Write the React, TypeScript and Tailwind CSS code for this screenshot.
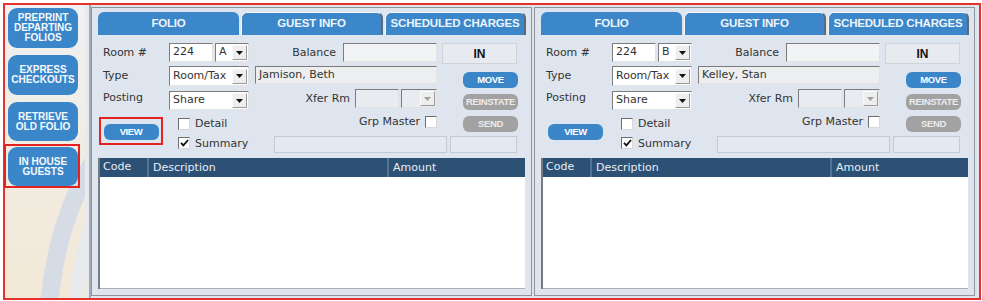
import type { ReactNode } from 'react'

const lbl = "font-['DejaVu_Sans',sans-serif] text-[11px] text-[#343434]"
const inset = 'border border-t-[#7c7c7c] border-l-[#7c7c7c] border-b-[#e3e3e3] border-r-[#e3e3e3]'
const flat = 'border border-[#c3cad2]'

function SideButton({ children, className = '' }: { children: ReactNode; className?: string }) {
    return (
        <div className={`relative flex w-[70px] flex-col items-center justify-center rounded-[9px] bg-[#3a86c8] text-center font-['Liberation_Sans',Arial,sans-serif] text-[10px] font-bold leading-[10px] text-[#f5f9fd] ${className}`}>
            {children}
        </div>
    )
}

function Tab({ children, active }: { children: ReactNode; active?: boolean }) {
    return (
        <div className={`flex h-[23px] items-center justify-center whitespace-nowrap rounded-t-[6px] bg-[#3b87c9] font-['Liberation_Sans',Arial,sans-serif] text-[11.5px] font-bold tracking-[-0.2px] text-[#eef4fb] ${active ? '' : 'border-t border-l border-t-[#f5f8fb] border-l-[#f5f8fb] border-r-2 border-r-[#5d6977]'}`}>
            {children}
        </div>
    )
}

function TextBox({ children, className = '' }: { children?: ReactNode; className?: string }) {
    return (
        <div className={`flex items-center pl-[3px] ${lbl} text-[#222] ${className}`}>
            {children}
        </div>
    )
}

function Select({ value, className = '', disabled }: { value?: string; className?: string; disabled?: boolean }) {
    return (
        <div className={`flex items-center justify-between ${inset} ${disabled ? 'bg-[#e8ecf0]' : 'bg-white'} ${className}`}>
            <span className={`pl-[3px] ${lbl} text-[#222]`}>{value}</span>
            <span className="mr-[1px] flex h-[15px] w-[15px] items-center justify-center border border-t-[#fafafa] border-l-[#fafafa] border-b-[#9a9a9a] border-r-[#9a9a9a] bg-[#eeeeee]">
                <svg width="7" height="4" viewBox="0 0 7 4">
                    <path d="M0 0h7L3.5 4z" fill={disabled ? '#a0a0a0' : '#111'} />
                </svg>
            </span>
        </div>
    )
}

function Check({ checked, className = '' }: { checked?: boolean; className?: string }) {
    return (
        <span className={`flex h-[12px] w-[12px] shrink-0 items-center justify-center border border-t-[#6d6d6d] border-l-[#6d6d6d] border-b-[#d8d8d8] border-r-[#d8d8d8] bg-white ${className}`}>
            {checked && (
                <svg width="9" height="8" viewBox="0 0 9 8">
                    <path d="M1 3.8l2.4 2.6L8 1" stroke="#111" strokeWidth="1.8" fill="none" />
                </svg>
            )}
        </span>
    )
}

function ActionBtn({ children, grey, className = '' }: { children: ReactNode; grey?: boolean; className?: string }) {
    return (
        <div className={`flex h-[16px] w-[55px] shrink-0 items-center justify-center whitespace-nowrap rounded-[6px] font-['Liberation_Sans',Arial,sans-serif] text-[9.5px] font-bold tracking-[-0.4px] ${grey ? 'bg-[#a2a2a2] text-[#ececec]' : 'bg-[#3a86c8] text-white'} ${className}`}>
            {children}
        </div>
    )
}

function FolioPanel({ unit, guest, markView }: { unit: string; guest: string; markView?: boolean }) {
    return (
        <div className="flex h-full w-[441px] flex-col border border-[#8e959d] bg-[#dee5ee]">
            <div className="grid grid-cols-[141px_142px_141px] gap-[2px] pl-[6px] pt-[4px]">
                <Tab active>FOLIO</Tab>
                <Tab>GUEST INFO</Tab>
                <Tab>SCHEDULED CHARGES</Tab>
            </div>

            <div className="mt-[8px] flex h-[21px] items-start pl-[11px]">
                <span className={`${lbl} w-[66px] leading-[19px]`}>Room #</span>
                <TextBox className={`h-[19px] w-[44px] bg-white ${inset}`}>224</TextBox>
                <Select value={unit} className="ml-[2px] h-[19px] w-[34px]" />
                <span className={`${lbl} w-[87px] text-right leading-[19px]`}>Balance</span>
                <TextBox className={`ml-[7px] h-[19px] w-[94px] bg-[#f1f3f5] ${inset}`} />
                <div className="ml-[5px] flex h-[21px] w-[75px] items-center justify-center border border-[#cdd4dc] bg-[#e7ebf0] font-['Liberation_Sans',Arial,sans-serif] text-[12px] font-bold text-[#111]">
                    IN
                </div>
            </div>

            <div className="mt-[2px] flex h-[22px] items-start pl-[11px]">
                <span className={`${lbl} w-[66px] leading-[20px]`}>Type</span>
                <Select value="Room/Tax" className="h-[20px] w-[80px]" />
                <TextBox className={`ml-[6px] h-[18px] w-[182px] bg-[#eceeef] ${inset}`}>{guest}</TextBox>
                <ActionBtn className="ml-[26px] mt-[6px]">MOVE</ActionBtn>
            </div>

            <div className="mt-[1px] flex h-[21px] items-start pl-[11px]">
                <span className={`${lbl} mt-[1px] w-[66px] leading-[16px]`}>Posting</span>
                <Select value="Share" className="mt-[2px] h-[19px] w-[80px]" />
                <span className={`${lbl} w-[101px] text-right leading-[19px]`}>Xfer Rm</span>
                <TextBox className={`ml-[5px] h-[19px] w-[44px] bg-[#e8ecf0] ${inset}`} />
                <Select disabled className="ml-[2px] h-[19px] w-[36px]" />
                <ActionBtn grey className="ml-[26px] mt-[5px]">REINSTATE</ActionBtn>
            </div>

            <div className="mt-[6px] flex pl-[11px]">
                <div className="w-[75px] shrink-0">
                    {markView ? (
                        <div className="-ml-[4px] mt-[1px] flex h-[28px] w-[64px] items-center justify-center border-2 border-[#e3231f] pt-[2px]">
                            <ActionBtn className="w-[54px]">VIEW</ActionBtn>
                        </div>
                    ) : (
                        <ActionBtn className="ml-[2px] mt-[8px] w-[54px]">VIEW</ActionBtn>
                    )}
                </div>
                <div className="flex flex-col">
                    <div className="flex h-[16px] items-start">
                        <Check className="mt-[2px]" />
                        <span className={`${lbl} ml-[5px] w-[145px] leading-[16px]`}>Detail</span>
                        <span className={`${lbl} w-[80px] whitespace-nowrap text-right leading-[12px]`}>Grp Master</span>
                        <Check className="ml-[5px] bg-[#f4f5f6]" />
                        <ActionBtn grey className="ml-[26px]">SEND</ActionBtn>
                    </div>
                    <div className="mt-[4px] flex h-[17px] items-start">
                        <Check checked className="mt-[1px]" />
                        <span className={`${lbl} ml-[5px] w-[79px] leading-[15px]`}>Summary</span>
                        <TextBox className={`h-[17px] w-[173px] bg-[#e3e9f0] ${flat}`} />
                        <TextBox className={`ml-[3px] h-[17px] w-[67px] bg-[#e3e9f0] ${flat}`} />
                    </div>
                </div>
            </div>

            <div className="mx-[6px] mb-[6px] mt-[5px] flex flex-1 flex-col border-l-2 border-[#737b84]">
                <div className="flex h-[19px] items-center bg-[#2d5075] font-['DejaVu_Sans',sans-serif] text-[11px] text-[#e8eef5]">
                    <span className="w-[47px] pl-[3px]">Code</span>
                    <span className="h-full w-[240px] border-l-2 border-[#557395] pl-[4px] leading-[19px]">Description</span>
                    <span className="h-full flex-1 border-l-2 border-[#557395] pl-[4px] leading-[19px]">Amount</span>
                </div>
                <div className="flex-1 border-b border-[#a9b0b8] bg-white" />
            </div>
        </div>
    )
}

export default function App() {
    return (
        <div className="h-[301px] w-[982px] bg-white pl-[3px] pt-[3px]">
            <div className="flex h-[297px] w-[978px] border-2 border-[#e5322d]">
                <div className="relative flex w-[84px] shrink-0 flex-col pl-[3px] pt-[3px]">
                    <svg className="absolute inset-0" width="84" height="293" viewBox="0 0 84 293">
                        <defs>
                            <linearGradient id="sideBg" x1="0" y1="0" x2="0" y2="1">
                                <stop offset="0" stopColor="#eff1f4" />
                                <stop offset="0.45" stopColor="#f1ede4" />
                                <stop offset="1" stopColor="#f2e8d6" />
                            </linearGradient>
                        </defs>
                        <rect width="84" height="293" fill="url(#sideBg)" />
                        <path d="M44 300 C50 240 64 195 92 150" stroke="#d5dce5" strokeWidth="18" fill="none" />
                        <path d="M70 300 C74 255 82 225 96 195" stroke="#e6eaef" strokeWidth="12" fill="none" />
                        <rect x="80" width="4" height="293" fill="#e7eaee" />
                    </svg>
                    <SideButton className="h-[40px]">
                        <span>PREPRINT</span>
                        <span>DEPARTING</span>
                        <span>FOLIOS</span>
                    </SideButton>
                    <SideButton className="mt-[7px] h-[40px]">
                        <span>EXPRESS</span>
                        <span>CHECKOUTS</span>
                    </SideButton>
                    <SideButton className="mt-[7px] h-[39px]">
                        <span>RETRIEVE</span>
                        <span>OLD FOLIO</span>
                    </SideButton>
                    <div className="relative -ml-[4px] mt-[3px] h-[44px] w-[76px] border-2 border-[#e3231f] pl-[2px] pt-[1px]">
                        <SideButton className="h-[39px]">
                            <span>IN HOUSE</span>
                            <span>GUESTS</span>
                        </SideButton>
                    </div>
                </div>

                <div className="flex flex-1 gap-[2px] border-l-2 border-[#a2a9b1] bg-[#dfe5ec] pb-[2px] pt-[2px]">
                    <FolioPanel unit="A" guest="Jamison, Beth" markView />
                    <FolioPanel unit="B" guest="Kelley, Stan" />
                </div>
            </div>
        </div>
    )
}
